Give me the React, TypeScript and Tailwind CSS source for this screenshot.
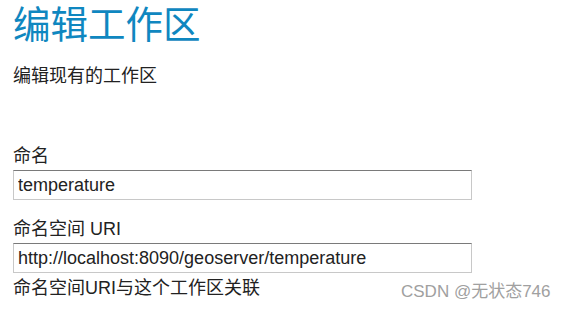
export default function App() {
  return (
    <div
      className="relative w-[565px] h-[311px] bg-white overflow-hidden pl-[13px]"
      style={{ fontFamily: '"Liberation Sans", "Noto Sans CJK SC", sans-serif' }}
    >
      <h1 className="text-[37.5px] leading-[46px] text-[#0f87c0] font-normal mt-[2px]">编辑工作区</h1>
      <p className="text-[18px] leading-[24px] text-[#222] mt-[16px]">编辑现有的工作区</p>
      <div className="mt-[57px] w-[459px]">
        <label className="block text-[18px] leading-[22px] text-[#222]">命名</label>
        <input
          readOnly
          value="temperature"
          className="block w-[459px] h-[30px] mt-[3px] px-[4px] text-[18px] text-[#222] border border-[#c8c8c8] border-t-[#7a7a7a] outline-none"
        />
        <label className="block text-[18px] leading-[22px] text-[#222] mt-[18px]">命名空间 URI</label>
        <input
          readOnly
          value="http://localhost:8090/geoserver/temperature"
          className="block w-[459px] h-[30px] mt-[3px] px-[4px] text-[18px] text-[#222] border border-[#c8c8c8] border-t-[#7a7a7a] outline-none"
        />
        <p className="text-[18px] leading-[22px] text-[#222] mt-[4px]">命名空间URI与这个工作区关联</p>
      </div>
      <div className="absolute left-[401px] top-[282px] text-[17px] leading-[20px] text-[#a0a0a0]">CSDN @无状态746</div>
    </div>
  );
}
